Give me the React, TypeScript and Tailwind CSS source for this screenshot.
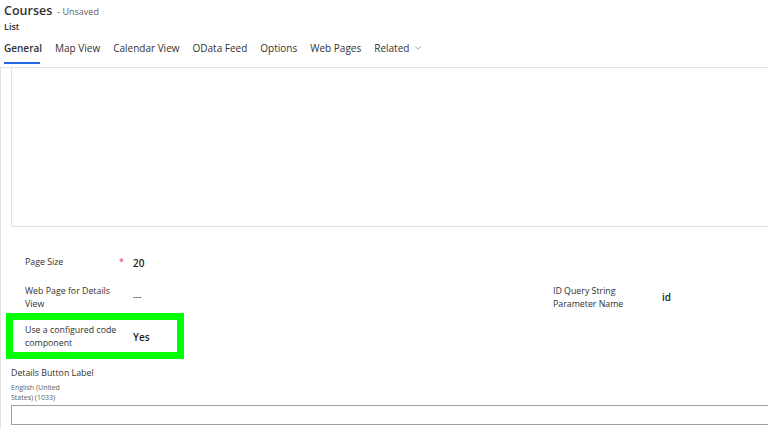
import { ChevronDown } from 'lucide-react';

const tabs = ['Map View', 'Calendar View', 'OData Feed', 'Options', 'Web Pages'];

export default function App() {
    return (
        <div className="w-[768px] h-[429px] overflow-hidden bg-white text-[#323130]" style={{ fontFamily: '"Open Sans", "Noto Sans", sans-serif' }}>
            {/* Header */}
            <div className="pl-1 pt-[2px]">
                <div className="flex items-baseline gap-[5px] h-[18px]">
                    <span className="text-[12.5px] font-semibold leading-[18px]">Courses</span>
                    <span className="text-[9px] text-[#605e5c]">- Unsaved</span>
                </div>
                <div className="text-[9px] font-semibold leading-[14px]">List</div>
            </div>

            {/* Tabs */}
            <div className="flex items-end gap-[13px] pl-1 h-[28px] mt-[2px] text-[10px]">
                <div className="flex flex-col items-start">
                    <span className="font-semibold leading-[14px]">General</span>
                    <span className="mt-[7px] h-[2px] w-[36px] bg-[#2266e3]" />
                </div>
                {tabs.map((tab) => (
                    <span key={tab} className="leading-[14px] mb-[9px]">{tab}</span>
                ))}
                <span className="flex items-center gap-1 leading-[14px] mb-[9px]">
                    Related
                    <ChevronDown className="w-[10px] h-[10px] text-[#605e5c]" strokeWidth={1.5} />
                </span>
            </div>

            {/* Body */}
            <div className="mt-[3px] border-t border-l border-[#e1e1e1] pl-[10px] h-[400px]">
                <div className="h-[159px] w-[800px] border-l border-b border-[#e1e1e1]" />

                <div className="text-[8.8px]">
                    {/* Page Size */}
                    <div className="flex items-center h-[26px] mt-[23px] pl-[14px]">
                        <span className="w-[94px] shrink-0">Page Size</span>
                        <span className="w-[14px] shrink-0 text-[#e0284f] self-start mt-[6px]">*</span>
                        <span className="font-semibold text-[10px] text-[#201f1e]">20</span>
                    </div>

                    {/* Web page / ID query */}
                    <div className="flex items-center h-[35px] mt-[4px] pl-[14px]">
                        <span className="w-[108px] shrink-0 pr-[14px] leading-[13px]">Web Page for Details View</span>
                        <span className="w-[420px] shrink-0 text-[#605e5c] font-semibold">---</span>
                        <span className="w-[109px] shrink-0 pr-[36px] leading-[13px]">ID Query String Parameter Name</span>
                        <span className="font-semibold text-[10px] text-[#201f1e]">id</span>
                    </div>

                    {/* Highlighted row */}
                    <div className="ml-[-5px] mt-[-2px] w-[178px] h-[46px] border-[7px] border-[#00ff00] flex items-center pl-[12px] pt-[2px]">
                        <span className="w-[108px] shrink-0 pr-[12px] leading-[13px]">Use a configured code component</span>
                        <span className="font-semibold text-[10px] text-[#201f1e]">Yes</span>
                    </div>

                    {/* Details button label */}
                    <div className="mt-[8px] leading-[13px]">Details Button Label</div>
                    <div className="mt-[3px] w-[56px] text-[7px] leading-[10px] text-[#605e5c]">English (United States) (1033)</div>
                    <div className="mt-[2px] h-[20px] w-[800px] border border-[#a19f9d]" />
                </div>
            </div>
        </div>
    );
}
